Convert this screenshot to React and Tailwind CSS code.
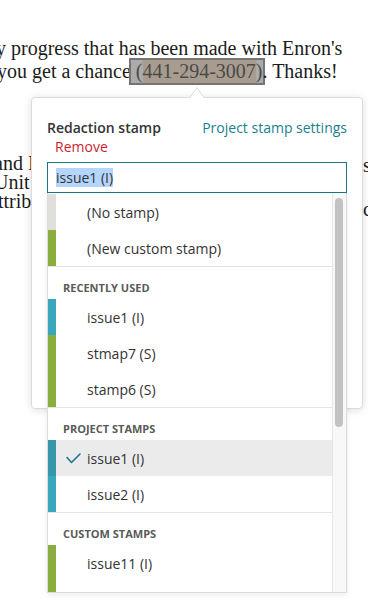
import React from 'react';

// stamp list shown under the redaction stamp input
const stampGroups = [
  {
    title: null,
    items: [
      { label: '(No stamp)', bar: 'bg-[#e0dfdc]' },
      { label: '(New custom stamp)', bar: 'bg-[#8aad3f]' },
    ],
  },
  {
    title: 'RECENTLY USED',
    items: [
      { label: 'issue1 (I)', bar: 'bg-[#3aa7bf]' },
      { label: 'stmap7 (S)', bar: 'bg-[#8aad3f]' },
      { label: 'stamp6 (S)', bar: 'bg-[#8aad3f]' },
    ],
  },
  {
    title: 'PROJECT STAMPS',
    items: [
      { label: 'issue1 (I)', bar: 'bg-[#3597a9]', selected: true },
      { label: 'issue2 (I)', bar: 'bg-[#3aa7bf]' },
    ],
  },
  {
    title: 'CUSTOM STAMPS',
    items: [
      { label: 'issue11 (I)', bar: 'bg-[#8aad3f]' },
      { label: 'issue12 (I)', bar: 'bg-[#8aad3f]' },
    ],
  },
];

const CheckMark = () => (
  <svg width="15" height="11" viewBox="0 0 15 11" fill="none">
    <polyline points="1,4.5 5.5,9.5 14,1" stroke="#1b7889" strokeWidth="1.6" strokeLinecap="round" strokeLinejoin="round" />
  </svg>
);

const StampRow = ({ item }) => (
  <div className={`flex h-[36px] items-center ${item.selected ? 'bg-[#ebebeb]' : 'bg-white'}`}>
    <div className={`w-[8px] self-stretch ${item.bar}`} />
    <div className="flex w-[31px] items-center pl-[10px]">{item.selected && <CheckMark />}</div>
    <span className="text-[14px] leading-[19px] text-[#333]">{item.label}</span>
  </div>
);

const App = () => {
  return (
    <div className="relative h-[605px] w-[368px] overflow-hidden bg-white">
      {/* document text behind the popover */}
      <div className="pt-[37px] font-['Liberation_Serif',serif] text-[20px] text-[#1c1c1c]">
        <div className="ml-[-4px] whitespace-nowrap leading-[22.5px]">
          y progress that has been made with Enron's
        </div>
        <div className="ml-[-3px] whitespace-nowrap leading-[22.5px]">
          you get a chance
          <span className="inline-block bg-[#ababab] pl-[5px] leading-[23px] text-[#4a4a4a] ring-2 ring-[#747474]">
            (<span className="inline-block bg-[#a89c8f]">441-294-3007</span>)
          </span>
          . Thanks!
        </div>
        <div className="mt-[71px] flex">
          <div className="flex-1 whitespace-nowrap leading-[19px]">
            <div className="ml-[-6px]">and I</div>
            <div className="ml-[-6px]">Unit</div>
            <div className="ml-[-11px]">attrib</div>
          </div>
          <div className="w-[5px] whitespace-nowrap leading-[22px]">
            <div>s</div>
            <div>&nbsp;</div>
            <div>c</div>
          </div>
        </div>
      </div>

      {/* redaction stamp popover */}
      <div className="absolute left-[31px] top-[97px] h-[312px] w-[332px] rounded-[4px] border border-[#dcdcdc] bg-white px-[15px] pt-[20px] font-['Open_Sans',sans-serif] shadow-[0_1px_8px_rgba(0,0,0,0.13)]">
        <svg className="absolute left-[158px] top-[-11px]" width="14" height="11" viewBox="0 0 14 11">
          <polygon points="0,11 7,0.6 14,11" fill="white" />
          <polyline points="0,10.5 7,0.6 14,10.5" fill="none" stroke="#dcdcdc" strokeWidth="1" />
        </svg>

        <div className="flex items-center justify-between text-[14px] leading-[19px]">
          <span className="font-semibold text-[#333]">Redaction stamp</span>
          <span className="text-[#1a7f8f]">Project stamp settings</span>
        </div>
        <div className="pl-[8px] text-[14px] leading-[19px] text-[#cc1f30]">Remove</div>

        <div className="relative mt-[6px]">
          <div className="flex h-[31px] items-center border border-[#1a7585] pl-[8px] text-[14px] leading-[19px] text-[#333]">
            <span className="bg-[#b4d5fe]">issue1 (I)</span>
          </div>

          <div className="absolute left-0 right-0 top-full z-10 flex h-[400px] overflow-hidden border border-t-0 border-[#dcdcdc] bg-white shadow-[0_2px_6px_rgba(0,0,0,0.08)]">
            <div className="flex-1 pt-[1px]">
              {stampGroups.map((group, i) => (
                <div key={i} className={i > 0 ? 'border-t border-[#e3e3e3]' : ''}>
                  {group.title && (
                    <div className="h-[32px] pl-[15px] pt-[15px] text-[11px] font-bold leading-none text-[#5a5a5a]">
                      {group.title}
                    </div>
                  )}
                  {group.items.map((item, j) => (
                    <StampRow key={j} item={item} />
                  ))}
                </div>
              ))}
            </div>
            <div className="w-[14px] border-l border-[#e6e6e6] bg-[#f8f8f8] pl-[2px] pt-[5px]">
              <div className="h-[229px] w-[8px] rounded-full bg-[#c2c2c2]" />
            </div>
          </div>
        </div>
      </div>
    </div>
  );
};

export default App;
